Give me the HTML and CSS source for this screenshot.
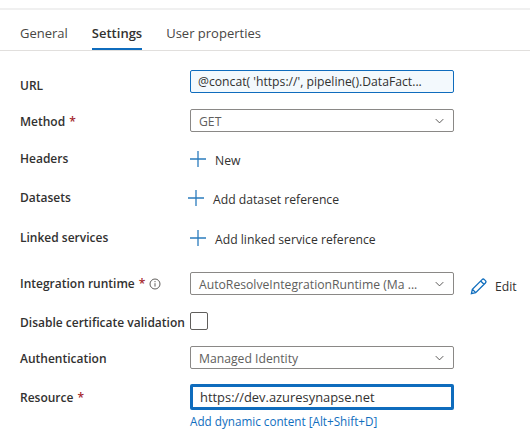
FILE: index.html
```html
<!DOCTYPE html>
<html lang="en">
<head>
  <meta charset="UTF-8" />
  <title>Web activity settings</title>
  <link rel="stylesheet" href="styles.css">
</head>
<body>
  <div class="topbar"></div>
  <nav class="tabs">
    <a>General</a>
    <a class="active">Settings</a>
    <a>User properties</a>
  </nav>

  <main class="form">
    <div class="row row-url">
      <label>URL</label>
      <div class="input expr">@concat( 'https://', pipeline().DataFact...</div>
    </div>

    <div class="row row-method">
      <label>Method <span class="req">*</span></label>
      <div class="input select">GET
        <svg class="chev" viewBox="0 0 12 7"><path d="M1 1l5 5 5-5"/></svg>
      </div>
    </div>

    <div class="row row-headers">
      <label>Headers</label>
      <a class="add">
        <svg class="plus" viewBox="0 0 16 16"><path d="M8 0v16M0 8h16"/></svg>
        <span>New</span>
      </a>
    </div>

    <div class="row row-datasets">
      <label>Datasets</label>
      <a class="add shift">
        <svg class="plus" viewBox="0 0 16 16"><path d="M8 0v16M0 8h16"/></svg>
        <span>Add dataset reference</span>
      </a>
    </div>

    <div class="row row-linked">
      <label>Linked services</label>
      <a class="add">
        <svg class="plus" viewBox="0 0 16 16"><path d="M8 0v16M0 8h16"/></svg>
        <span>Add linked service reference</span>
      </a>
    </div>

    <div class="row row-runtime">
      <label>Integration runtime <span class="req">*</span>
        <svg class="info" viewBox="0 0 12 12"><circle cx="6" cy="6" r="5"/><path d="M6 5.2v3.4M6 3v1.2"/></svg>
      </label>
      <div class="input select">AutoResolveIntegrationRuntime (Ma ...
        <svg class="chev" viewBox="0 0 12 7"><path d="M1 1l5 5 5-5"/></svg>
      </div>
      <a class="edit">
        <svg class="pencil" viewBox="0 0 18 18"><path d="M1.5 16.5l1-4.5L12.8 1.7a1.7 1.7 0 0 1 2.4 0l1.1 1.1a1.7 1.7 0 0 1 0 2.4L6 15.5zM2.5 12L6 15.5M11.3 3.2l3.5 3.5"/></svg>
        <span>Edit</span>
      </a>
    </div>

    <div class="row row-check">
      <label>Disable certificate validation</label>
      <div class="checkbox"></div>
    </div>

    <div class="row row-auth">
      <label>Authentication</label>
      <div class="input select">Managed Identity
        <svg class="chev" viewBox="0 0 12 7"><path d="M1 1l5 5 5-5"/></svg>
      </div>
    </div>

    <div class="row row-resource">
      <label>Resource <span class="req">*</span></label>
      <div class="input focused">https://dev.azuresynapse.net</div>
    </div>
    <a class="dynamic">Add dynamic content [Alt+Shift+D]</a>
  </main>
</body>
</html>
```

FILE: styles.css
```css
:root {
  --text: #323130;
  --blue: #0f6cbd;
  --link: #106ebe;
  --border: #8a8886;
  --req: #a4262c;
}

body {
  margin: 0;
  background: #fff;
  color: var(--text);
  font-family: "Open Sans", "Noto Sans", sans-serif;
  font-size: 12.2px;
}

.topbar {
  box-sizing: border-box;
  height: 10px;
  border-bottom: 2px solid #f0f0f0;
}

.tabs {
  display: flex;
  gap: 24px;
  height: 40px;
  padding-left: 20px;
  border-bottom: 1px solid #e1dfdd;
  font-size: 13px;
  line-height: 46px;
}
.tabs a {
  height: 40px;
  color: #484644;
}
.tabs a.active {
  font-weight: 600;
  color: #323130;
  box-shadow: inset 0 -2px 0 var(--blue);
}

.form {
  padding-left: 20px;
}

.row {
  display: flex;
  align-items: center;
  height: 23px;
}
.row label {
  display: flex;
  align-items: center;
  gap: 4px;
  width: 170px;
  flex: none;
  margin-bottom: 2px;
  font-size: 12px;
  font-weight: 600;
  white-space: nowrap;
  color: #323130;
}
.req { color: var(--req); }

.row-url { margin-top: 19px; }
.row-url label { padding-top: 10px; }
.row-method { margin-top: 16px; }
.row-method label { padding-top: 3px; }
.row-headers { margin-top: 15px; height: 24px; }
.row-datasets { margin-top: 15px; height: 24px; }
.row-linked { margin-top: 16px; height: 24px; }
.row-runtime { margin-top: 22px; }
.row-runtime label { padding-top: 2px; }
.row-check { margin-top: 17px; height: 18px; }
.row-check label { padding-top: 4px; }
.row-auth { margin-top: 16px; }
.row-auth label { padding-top: 3px; }
.row-resource { margin-top: 15px; height: 26px; }
.row-resource label { padding-top: 2px; }

.input {
  box-sizing: border-box;
  position: relative;
  width: 264px;
  height: 23px;
  padding: 0 8px;
  border: 1px solid var(--border);
  border-radius: 2px;
  line-height: 22px;
  white-space: nowrap;
  color: #605e5c;
}
.input.select { line-height: 23px; }
.input.expr {
  background: #f3f9fd;
  border-color: var(--blue);
  color: var(--text);
  padding-left: 7px;
}
.input.focused {
  height: 26px;
  border: 3px solid var(--blue);
  font-size: 12.9px;
  color: var(--text);
  padding-left: 7px;
  line-height: 20px;
}

.chev {
  position: absolute;
  right: 9px;
  top: 8px;
  width: 9px;
  height: 6px;
  fill: none;
  stroke: #484644;
  stroke-width: 1.2;
}

.add {
  display: flex;
  align-items: center;
  gap: 9px;
  color: var(--text);
}
.add span { padding-top: 3px; }
.add.shift { margin-left: -2px; }
.plus {
  width: 16px;
  height: 16px;
  fill: none;
  stroke: #2b7cbd;
  stroke-width: 1.3;
}

.info {
  width: 12px;
  height: 12px;
  fill: none;
  stroke: #605e5c;
  stroke-width: 1;
}

.edit {
  display: flex;
  align-items: center;
  gap: 8px;
  margin-left: 16px;
  color: var(--text);
}
.edit span { padding-top: 6px; }
.pencil {
  width: 17px;
  height: 17px;
  margin-top: 5px;
  fill: none;
  stroke: var(--link);
  stroke-width: 1.4;
}

.checkbox {
  box-sizing: border-box;
  width: 18px;
  height: 18px;
  border: 1px solid #605e5c;
  border-radius: 2px;
}

.dynamic {
  display: block;
  margin: 3px 0 0 170px;
  font-size: 11.7px;
  color: var(--link);
}
```
